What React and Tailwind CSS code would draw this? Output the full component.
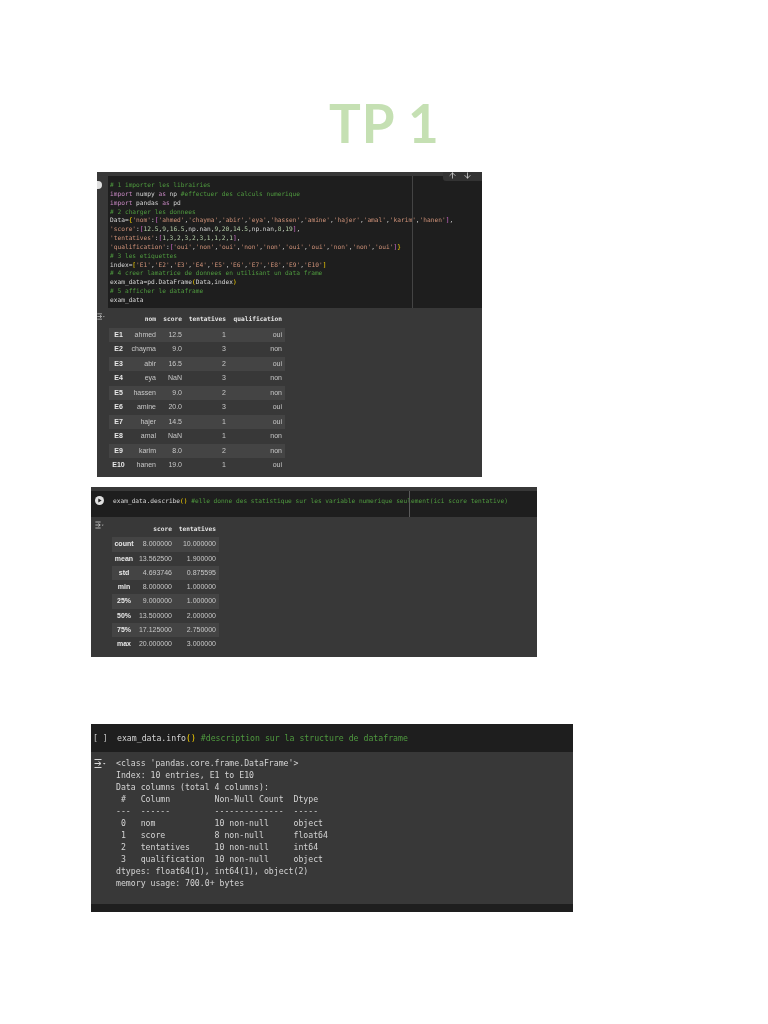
import { ArrowUp, ArrowDown } from 'lucide-react';

const comment = 'text-[#4f9a3f]';
const keyword = 'text-[#c586c0]';
const str = 'text-[#ce9178]';
const num = 'text-[#b5cea8]';
const gold = 'text-[#ffd700]';
const pink = 'text-[#da70d6]';

function Strs({ items }) {
    return items.map((s, i) => (
        <span key={i}>
            <span className={str}>'{s}'</span>
            {i < items.length - 1 ? ',' : ''}
        </span>
    ));
}

function OutputIcon({ className }) {
    return (
        <svg className={className} width="12" height="10" viewBox="0 0 12 10" fill="none" stroke="#d8d8d8" strokeWidth="1">
            <path d="M0.5 1H7.5M0.5 9H7.5M0.5 5H6.5M4.5 3L7 5L4.5 7" />
            <path d="M9 4.5H11.5L10.2 6Z" fill="#d8d8d8" stroke="none" />
        </svg>
    );
}

function DataTable({ columns, head, rows, widthClass, leadingClass }) {
    return (
        <div className={`font-['Liberation_Sans',sans-serif] text-[7px] text-[#c8c8c8] ${leadingClass} ${widthClass}`}>
            <div className={`grid ${columns} mb-[1px] font-['DejaVu_Sans_Mono',monospace] text-[6.2px] font-bold text-[#e4e4e4]`}>
                {head.map((h, i) => (
                    <span key={i} className="text-right">{h}</span>
                ))}
            </div>
            {rows.map((row, r) => (
                <div key={r} className={`grid ${columns} ${r % 2 === 0 ? 'bg-[#444444]' : ''}`}>
                    {row.map((cell, i) => (
                        <span key={i} className={i === 0 ? 'text-center font-bold text-[#e8e8e8]' : 'text-right'}>{cell}</span>
                    ))}
                </div>
            ))}
        </div>
    );
}

const examRows = [
    ['E1', 'ahmed', '12.5', '1', 'oui'],
    ['E2', 'chayma', '9.0', '3', 'non'],
    ['E3', 'abir', '16.5', '2', 'oui'],
    ['E4', 'eya', 'NaN', '3', 'non'],
    ['E5', 'hassen', '9.0', '2', 'non'],
    ['E6', 'amine', '20.0', '3', 'oui'],
    ['E7', 'hajer', '14.5', '1', 'oui'],
    ['E8', 'amal', 'NaN', '1', 'non'],
    ['E9', 'karim', '8.0', '2', 'non'],
    ['E10', 'hanen', '19.0', '1', 'oui'],
];

const describeRows = [
    ['count', '8.000000', '10.000000'],
    ['mean', '13.562500', '1.900000'],
    ['std', '4.693746', '0.875595'],
    ['min', '8.000000', '1.000000'],
    ['25%', '9.000000', '1.000000'],
    ['50%', '13.500000', '2.000000'],
    ['75%', '17.125000', '2.750000'],
    ['max', '20.000000', '3.000000'],
];

const infoLines = [
    "<class 'pandas.core.frame.DataFrame'>",
    'Index: 10 entries, E1 to E10',
    'Data columns (total 4 columns):',
    ' #   Column         Non-Null Count  Dtype',
    '---  ------         --------------  -----',
    ' 0   nom            10 non-null     object',
    ' 1   score          8 non-null      float64',
    ' 2   tentatives     10 non-null     int64',
    ' 3   qualification  10 non-null     object',
    'dtypes: float64(1), int64(1), object(2)',
    'memory usage: 700.0+ bytes',
];

export default function App() {
    return (
        <div className="w-[768px] h-[1024px] bg-white overflow-hidden">
            {/* Title */}
            <h1 className="pt-[92px] h-[172px] pl-[329px] font-['Lato',sans-serif] font-bold text-[53px] leading-[62px] tracking-[1px] text-[#c5e0b3]">TP 1</h1>

            {/* Cell 1 */}
            <div className="relative ml-[97px] w-[385px] h-[305px] bg-[#383838] blur-[0.5px] overflow-hidden">
                <div className="flex h-[136px] pt-[4px]">
                    <div className="w-[11px] shrink-0 pt-[5px]">
                        <div className="w-[5px] h-[8px] rounded-r-full bg-[#e0e0e0]" />
                    </div>
                    <div className="relative flex-1 bg-[#1e1e1e] pl-[2px] pt-[5px] font-['DejaVu_Sans_Mono',monospace] text-[6.2px] leading-[8.85px] text-[#d4d4d4] whitespace-pre">
                        <div className={comment}># 1 importer les librairies</div>
                        <div><span className={keyword}>import</span> numpy <span className={keyword}>as</span> np <span className={comment}>#effectuer des calculs numerique</span></div>
                        <div><span className={keyword}>import</span> pandas <span className={keyword}>as</span> pd</div>
                        <div className={comment}># 2 charger les donnees</div>
                        <div>Data=<span className={gold}>{'{'}</span><span className={str}>'nom'</span>:<span className={pink}>[</span><Strs items={['ahmed', 'chayma', 'abir', 'eya', 'hassen', 'amine', 'hajer', 'amal', 'karim', 'hanen']} /><span className={pink}>]</span>,</div>
                        <div><span className={str}>'score'</span>:<span className={pink}>[</span><span className={num}>12.5</span>,<span className={num}>9</span>,<span className={num}>16.5</span>,np.nan,<span className={num}>9</span>,<span className={num}>20</span>,<span className={num}>14.5</span>,np.nan,<span className={num}>8</span>,<span className={num}>19</span><span className={pink}>]</span>,</div>
                        <div><span className={str}>'tentatives'</span>:<span className={pink}>[</span><span className={num}>1,3,2,3,2,3,1,1,2,1</span><span className={pink}>]</span>,</div>
                        <div><span className={str}>'qualification'</span>:<span className={pink}>[</span><Strs items={['oui', 'non', 'oui', 'non', 'non', 'oui', 'oui', 'non', 'non', 'oui']} /><span className={pink}>]</span><span className={gold}>{'}'}</span></div>
                        <div className={comment}># 3 les etiquettes</div>
                        <div>index=<span className={gold}>[</span><Strs items={['E1', 'E2', 'E3', 'E4', 'E5', 'E6', 'E7', 'E8', 'E9', 'E10']} /><span className={gold}>]</span></div>
                        <div className={comment}># 4 creer lamatrice de donnees en utilisant un data frame</div>
                        <div>exam_data=pd.DataFrame<span className={gold}>(</span>Data,index<span className={gold}>)</span></div>
                        <div className={comment}># 5 afficher le dataframe</div>
                        <div>exam_data</div>
                        <div className="absolute left-[304px] top-0 bottom-0 w-px bg-[#444444]" />
                    </div>
                </div>
                {/* toolbar over the cell corner */}
                <div className="absolute right-0 top-0 w-[39px] h-[9px] rounded-bl-[3px] bg-[#333333] flex items-center gap-[6px] pl-[5px] text-[#e0e0e0] overflow-hidden">
                    <ArrowUp size={9} strokeWidth={2} className="shrink-0 -mt-[2px]" />
                    <ArrowDown size={9} strokeWidth={2} className="shrink-0 -mt-[2px]" />
                </div>
                <div className="flex">
                    <div className="w-[12px] shrink-0 pt-[4px]">
                        <OutputIcon className="w-[8px] h-[9px]" />
                    </div>
                    <div className="pt-[4px]">
                        <DataTable
                            columns="grid-cols-[19px_28px_26px_44px_56px]"
                            head={['', 'nom', 'score', 'tentatives', 'qualification']}
                            rows={examRows}
                            widthClass="w-[176px]"
                            leadingClass="leading-[14.5px]"
                        />
                    </div>
                </div>
            </div>

            {/* Cell 2 */}
            <div className="relative mt-[10px] ml-[91px] w-[446px] h-[170px] bg-[#383838] blur-[0.5px] overflow-hidden">
                <div className="flex items-center h-[26px] mt-[4px] bg-[#1e1e1e] pb-[8px] pt-[1px]">
                    <svg className="ml-[4px] shrink-0" width="9" height="9" viewBox="0 0 9 9">
                        <circle cx="4.5" cy="4.5" r="4.5" fill="#e0e0e0" />
                        <path d="M3.3 2.4L6.6 4.5L3.3 6.6Z" fill="#1e1e1e" />
                    </svg>
                    <div className="ml-[9px] font-['DejaVu_Sans_Mono',monospace] text-[6.2px] leading-[9px] text-[#d4d4d4] whitespace-pre">
                        exam_data.describe<span className={gold}>()</span> <span className={comment}>#elle donne des statistique sur les variable numerique seulement(ici score tentative)</span>
                    </div>
                </div>
                <div className="absolute left-[318px] top-[4px] h-[26px] w-px bg-[#5a5a5a]" />
                <div className="flex">
                    <div className="w-[21px] shrink-0 pl-[4px] pt-[4px]">
                        <OutputIcon className="w-[9px] h-[8px]" />
                    </div>
                    <div className="pt-[5px]">
                        <DataTable
                            columns="grid-cols-[24px_36px_44px_3px]"
                            head={['', 'score', 'tentatives', '']}
                            rows={describeRows.map((r) => [...r, ''])}
                            widthClass="w-[107px]"
                            leadingClass="leading-[14.3px]"
                        />
                    </div>
                </div>
            </div>

            {/* Cell 3 */}
            <div className="mt-[67px] ml-[91px] w-[482px] h-[188px] flex flex-col bg-[#383838] blur-[0.5px] overflow-hidden font-['DejaVu_Sans_Mono',monospace] text-[8.2px] whitespace-pre">
                <div className="flex items-center h-[28px] shrink-0 bg-[#1e1e1e] text-[#d4d4d4]">
                    <span className="ml-[2px] w-[24px] text-[#c8c8c8]">[ ]</span>
                    <span>exam_data.info<span className={gold}>()</span> <span className={comment}>#description sur la structure de dataframe</span></span>
                </div>
                <div className="flex flex-1 pt-[5px]">
                    <div className="w-[25px] shrink-0 pl-[3px] pt-[1px]">
                        <OutputIcon className="w-[12px] h-[11px]" />
                    </div>
                    <div className="leading-[12px] text-[#d4d4d4]">
                        {infoLines.map((line, i) => (
                            <div key={i}>{line}</div>
                        ))}
                    </div>
                </div>
                <div className="h-[8px] shrink-0 bg-[#1e1e1e]" />
            </div>
        </div>
    );
}
